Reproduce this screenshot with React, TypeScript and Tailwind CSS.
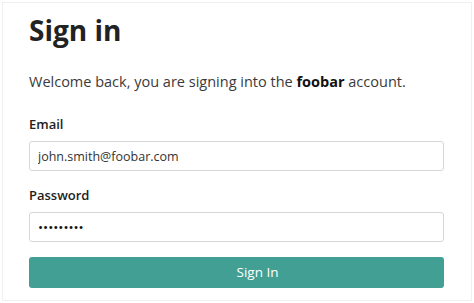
export default function App() {
  return (
    <div className="h-[303px] w-[474px] bg-white p-[2px] font-['Open_Sans',sans-serif] text-[#333]">
      <div className="h-full w-full border border-[#f0f0f0] pl-[26px] pr-[27px] pt-[7px]">
        <h1 className="text-[28px] font-bold leading-[40px] text-[#222]">Sign in</h1>
        <p className="mt-[22px] text-[14.5px] leading-[20px] text-[#3a3a3a]">
          Welcome back, you are signing into the <b className="font-bold text-[#111]">foobar</b> account.
        </p>
        <label className="mt-[23px] block text-[13px] font-semibold leading-[18px] text-[#222]">Email</label>
        <input
          readOnly
          value="john.smith@foobar.com"
          className="mt-[8px] block h-[30px] w-full rounded-[3px] border border-[#d6d6d6] px-[8px] text-[12.5px] text-[#333] outline-none"
        />
        <label className="mt-[15px] block text-[13px] font-semibold leading-[18px] text-[#222]">Password</label>
        <input
          readOnly
          type="password"
          value="123456789"
          className="mt-[8px] block h-[30px] w-full rounded-[3px] border border-[#d6d6d6] px-[8px] text-[13.5px] text-[#111] outline-none"
        />
        <button className="mt-[15px] block h-[31px] w-full rounded-[3px] bg-[#429f93] pl-[42px] text-[13.5px] text-white">
          Sign In
        </button>
      </div>
    </div>
  );
}
